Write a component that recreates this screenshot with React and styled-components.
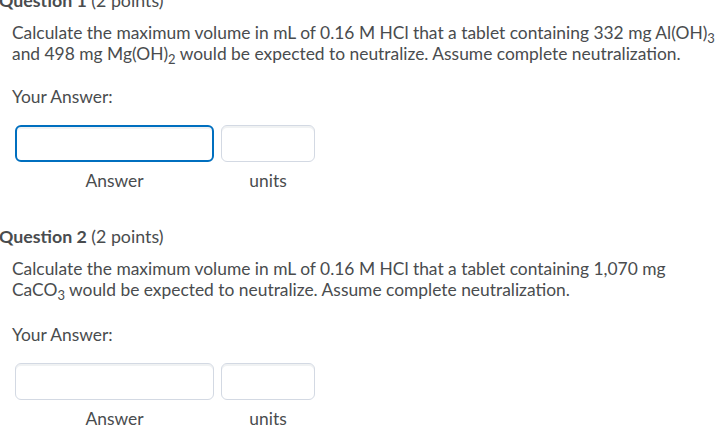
import React from 'react'
import styled, { createGlobalStyle } from 'styled-components';

const questions = [
    {
        num: 1,
        points: 2,
        focused: true,
        subBelow: false,
        prompt: (
            <>
                Calculate the maximum volume in mL of 0.16 M HCl that a tablet containing 332 mg Al(OH)<sub>3</sub><br />
                and 498 mg Mg(OH)<sub>2</sub> would be expected to neutralize. Assume complete neutralization.
            </>
        )
    },
    {
        num: 2,
        points: 2,
        focused: false,
        subBelow: true,
        prompt: (
            <>
                Calculate the maximum volume in mL of 0.16 M HCl that a tablet containing 1,070 mg<br />
                CaCO<sub>3</sub> would be expected to neutralize. Assume complete neutralization.
            </>
        )
    }
];

export default function App(){
    return(
        <>
            <GlobalStyle />
            <Pagina>
                {questions.map((q) => (
                    <Questao key={q.num}>
                        <Titulo>
                            Question {q.num} <span>({q.points} points)</span>
                        </Titulo>
                        <Corpo>
                            <Enunciado $folga={q.subBelow}>{q.prompt}</Enunciado>
                            <Rotulo>Your Answer:</Rotulo>
                            <Campos>
                                <Campo>
                                    <Caixa type="text" $largura={199} $foco={q.focused} />
                                    <Legenda>Answer</Legenda>
                                </Campo>
                                <Campo>
                                    <Caixa type="text" $largura={94} />
                                    <Legenda>units</Legenda>
                                </Campo>
                            </Campos>
                        </Corpo>
                    </Questao>
                ))}
            </Pagina>
        </>
    );
}

const GlobalStyle = createGlobalStyle`
    body{
        margin: 0;
        background: #FFFFFF;
        font-family: Lato, "Open Sans", sans-serif;
        color: #494C4E;
    }
`;
const Pagina = styled.div`
    margin-top: -12px;
    overflow: hidden;
`;
const Questao = styled.section`
    margin-bottom: 33px;
`;
const Titulo = styled.h2`
    margin: 0 0 0 -1px;
    font-size: 17.8px;
    line-height: 24px;
    font-weight: 700;
    span{
        font-weight: 400;
    }
`;
const Corpo = styled.div`
    padding-left: 12px;
    font-size: 17.4px;
    line-height: 21px;
`;
const Enunciado = styled.p`
    margin: 10px 0 0 0;
    padding-bottom: ${(p) => p.$folga ? 2 : 0}px;
    white-space: nowrap;
    sub{
        font-size: 13px;
        line-height: 0;
    }
`;
const Rotulo = styled.p`
    margin: 22px 0 0 0;
`;
const Campos = styled.div`
    display: flex;
    gap: 7px;
    margin-top: 18px;
    margin-left: 3px;
`;
const Campo = styled.div`
    display: flex;
    flex-direction: column;
    align-items: center;
`;
const Caixa = styled.input`
    width: ${(p) => p.$largura}px;
    height: 37px;
    box-sizing: border-box;
    margin: 0;
    background: #FFFFFF;
    border: ${(p) => p.$foco ? '2px solid #006FBF' : '1px solid #D3D9E3'};
    border-radius: 6px;
    box-shadow: inset 0 2px 0 0 rgba(181, 189, 194, 0.2);
    outline: none;
`;
const Legenda = styled.span`
    margin-top: 8px;
`;
